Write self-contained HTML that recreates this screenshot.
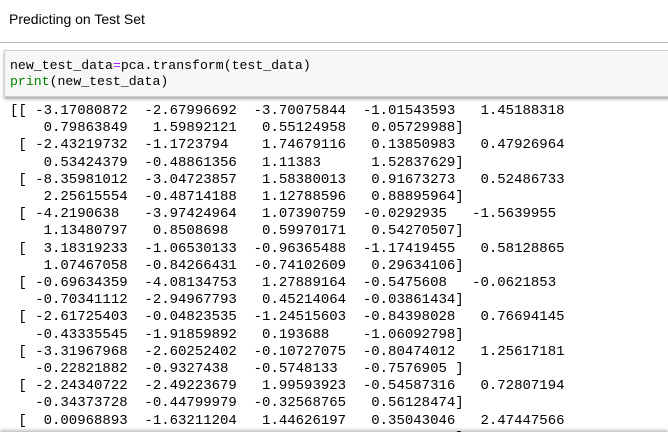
<!DOCTYPE html>
<html><head><style>
html,body{margin:0;padding:0;background:#fff;width:668px;height:443px;overflow:hidden;position:relative}
.title{position:absolute;left:9px;top:11px;font:14px "Liberation Sans",sans-serif;color:#000}
.sep{position:absolute;left:0;top:42px;width:668px;height:1px;background:#bbb}
.code{position:absolute;left:4px;top:50px;width:680px;height:45px;background:#f7f7f7;border:1px solid #cfcfcf;border-right:none;box-shadow:0 2px 3px rgba(0,0,0,.35)}
.code pre{margin:0;position:absolute;left:5px;top:7px;font:13.2px/16px "Liberation Mono",monospace;color:#000}
.g{color:#008000}.p{color:#aa22ff}
.out{position:absolute;left:10px;top:103px;margin:0;font:14px/17.2px "Liberation Mono",monospace;color:#000;white-space:pre}
.bot{position:absolute;left:0;top:432px;width:668px;height:11px;background:#fff;box-shadow:0 -2px 3px rgba(0,0,0,.25)}
</style></head><body>
<div class="title">Predicting on Test Set</div>
<div class="sep"></div>
<div class="code"><pre>new_test_data<span class="p">=</span>pca.transform(test_data)
<span class="g">print</span>(new_test_data)</pre></div>
<pre class="out">[[ -3.17080872  -2.67996692  -3.70075844  -1.01543593   1.45188318
    0.79863849   1.59892121   0.55124958   0.05729988]
 [ -2.43219732  -1.1723794    1.74679116   0.13850983   0.47926964
    0.53424379  -0.48861356   1.11383      1.52837629]
 [ -8.35981012  -3.04723857   1.58380013   0.91673273   0.52486733
    2.25615554  -0.48714188   1.12788596   0.88895964]
 [ -4.2190638   -3.97424964   1.07390759  -0.0292935   -1.5639955
    1.13480797   0.8508698    0.59970171   0.54270507]
 [  3.18319233  -1.06530133  -0.96365488  -1.17419455   0.58128865
    1.07467058  -0.84266431  -0.74102609   0.29634106]
 [ -0.69634359  -4.08134753   1.27889164  -0.5475608   -0.0621853
   -0.70341112  -2.94967793   0.45214064  -0.03861434]
 [ -2.61725403  -0.04823535  -1.24515603  -0.84398028   0.76694145
   -0.43335545  -1.91859892   0.193688    -1.06092798]
 [ -3.31967968  -2.60252402  -0.10727075  -0.80474012   1.25617181
   -0.22821882  -0.9327438   -0.5748133   -0.7576905 ]
 [ -2.24340722  -2.49223679   1.99593923  -0.54587316   0.72807194
   -0.34373728  -0.44799979  -0.32568765   0.56128474]
 [  0.00968893  -1.63211204   1.44626197   0.35043046   2.47447566
    1.54814044  -0.85549487   0.37797488   1.42848858]</pre>
<div class="bot"></div>
</body></html>
